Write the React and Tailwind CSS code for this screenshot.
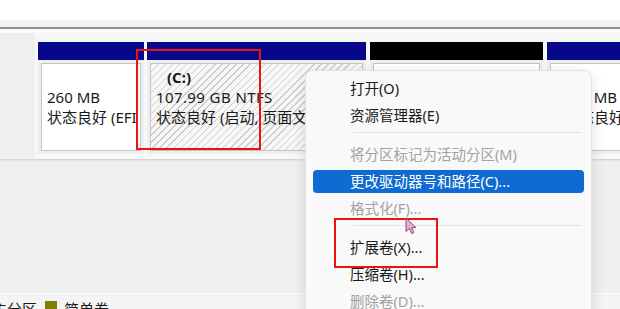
import React from "react";

const font = "font-['Segoe_UI','Noto_Sans','Noto_Sans_CJK_SC',sans-serif]";

function Partition({ width, header, hatched, children }) {
  return (
    <div className={`flex flex-col shrink-0 ${width}`}>
      <div className={`h-[18px] ${header}`} />
      <div className="flex-1 p-[3px] bg-[#eeeeee]">
        <div
          className={`h-full border border-[#c4c4c4] overflow-hidden whitespace-nowrap pt-[3px] pl-[5px] text-[15px] leading-[20px] text-[#1a1a1a] ${
            hatched
              ? "bg-[image:repeating-linear-gradient(135deg,#cdcdcd_0px,#cdcdcd_1px,#f7f7f7_1px,#f7f7f7_5px)]"
              : "bg-white"
          }`}
        >
          {children}
        </div>
      </div>
    </div>
  );
}

function Item({ label, disabled, active }) {
  return (
    <div className="h-[27px] py-[2px]">
      <div
        className={`h-full rounded-[4px] flex items-center pl-[37px] text-[14.5px] whitespace-nowrap ${
          active ? "bg-[#0f6ad2] text-white" : disabled ? "text-[#a2a2a2]" : "text-[#1b1b1b]"
        }`}
      >
        {label}
      </div>
    </div>
  );
}

function Separator() {
  return (
    <div className="pt-[3px] pb-[8px]">
      <div className="h-px bg-[#e4e4e4] ml-[40px] mr-[2px]" />
    </div>
  );
}

export default function App() {
  return (
    <div className={`relative w-[620px] h-[309px] overflow-hidden bg-white ${font}`}>
      {/* toolbar strip */}
      <div className="h-[20px] bg-white" />
      <div className="h-[7px] bg-[#f3f3f3]" />
      <div className="h-[2px] bg-[#8e8e8e]" />
      <div className="h-[4px] bg-[#fafafa]" />

      {/* disk row */}
      <div className="flex h-[127px] border-b border-[#d6d6d6]">
        <div className="w-[36px] shrink-0 bg-[#efefef] border-r border-[#fbfbfb]" />
        <div className="flex flex-1 pt-[9px] pb-[5px] pl-[2px] bg-[#f7f7f7] overflow-hidden">
          <Partition width="w-[106px]" header="bg-[#07078a]">
            <div>&nbsp;</div>
            <div>260 MB</div>
            <div>状态良好 (EFI 系统分区)</div>
          </Partition>
          <div className="w-[3px] shrink-0" />
          <Partition width="w-[219px]" header="bg-[#07078a]" hatched>
            <div className="ml-[11px] font-bold">(C:)</div>
            <div className="tracking-[0.4px]">107.99 GB NTFS</div>
            <div>状态良好 (启动, 页面文件, 故障转储, 基本数据分区)</div>
          </Partition>
          <div className="w-[4px] shrink-0" />
          <Partition width="w-[173px]" header="bg-black" />
          <div className="w-[4px] shrink-0" />
          <Partition width="w-[90px]" header="bg-[#07078a]">
            <div>&nbsp;</div>
            <div className="pl-[8px]">980 MB</div>
            <div className="pl-[8px]">状态良好 (恢复分区)</div>
          </Partition>
        </div>
      </div>

      {/* empty area */}
      <div className="h-[133px] bg-[#efeef1] border-t border-[#e6e6e6]" />

      {/* legend */}
      <div className="h-[20px] bg-[#f4f4f4] border-t border-[#fbfbfb] flex items-start pt-[5px] text-[15px] leading-[20px] text-[#1a1a1a] whitespace-nowrap">
        <span className="-ml-[8px]">主分区</span>
        <span className="ml-[8px] mt-[2px] w-[12px] h-[14px] bg-[#808000]" />
        <span className="ml-[7px]">简单卷</span>
      </div>

      {/* annotation boxes */}
      <div className="absolute left-[136px] top-[49px] w-[125px] h-[101px] border-2 border-[#ee1111]" />

      {/* context menu */}
      <div className="absolute left-[305px] top-[70px] w-[287px] h-[260px] rounded-[8px] bg-[#f9f9f9] border border-[#e2e2e2] shadow-[0_4px_14px_rgba(0,0,0,0.12)] px-[7px] pt-[4px]">
        <Item label="打开(O)" />
        <Item label="资源管理器(E)" />
        <Separator />
        <Item label="将分区标记为活动分区(M)" disabled />
        <Item label="更改驱动器号和路径(C)..." active />
        <Item label="格式化(F)..." disabled />
        <Separator />
        <Item label="扩展卷(X)..." />
        <Item label="压缩卷(H)..." />
        <Item label="删除卷(D)..." disabled />
      </div>

      <div className="absolute left-[334px] top-[218px] w-[104px] h-[50px] border-2 border-[#ee1111]" />

      {/* mouse pointer */}
      <svg className="absolute left-[405px] top-[217px]" width="14" height="18" viewBox="0 0 14 18">
        <path
          d="M1 1 L1 14.5 L4.3 11.4 L6.6 16.6 L8.8 15.6 L6.6 10.6 L11 10.6 Z"
          fill="#f3a6d6"
          stroke="#6b4a63"
          strokeWidth="0.9"
          strokeLinejoin="round"
        />
      </svg>
    </div>
  );
}
